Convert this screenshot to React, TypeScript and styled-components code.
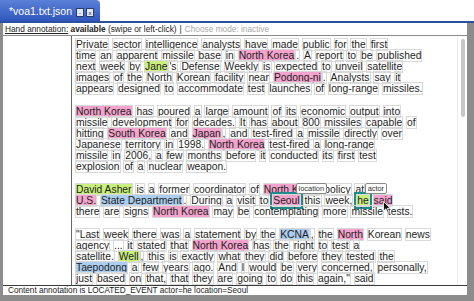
import React from 'react';
import styled, { createGlobalStyle } from 'styled-components';

const GlobalStyle = createGlobalStyle`
  html, body {
    margin: 0;
    padding: 0;
    background: #ffffff;
    font-family: "Liberation Sans", Arial, sans-serif;
  }
`;

const Frame = styled.div`
  width: 474px;
  height: 301px;
  display: flex;
  flex-direction: column;
  overflow: hidden;
`;

const TabBar = styled.div`
  height: 21px;
  display: flex;
  align-items: flex-end;
  background: #ffffff;
  border-bottom: 2px solid #2c4f9f;
`;

const Tab = styled.div`
  width: 100px;
  height: 21px;
  box-sizing: border-box;
  display: flex;
  align-items: center;
  padding-left: 9px;
  gap: 4px;
  background: linear-gradient(#5b80d8, #3157bd);
  border-top-right-radius: 4px;
  color: #ffffff;
  font-size: 10.5px;
`;

const TabButtons = styled.div`
  display: flex;
  gap: 2px;
  margin-top: 4px;
`;

const TabButton = styled.span`
  width: 6px;
  height: 7px;
  display: flex;
  align-items: center;
  justify-content: center;
  background: #dfe6f6;
  border: 1px solid #2b3d70;
  color: #1b2a55;
  font-size: 6px;
  line-height: 6px;
`;

const Body = styled.div`
  flex: 1;
  display: flex;
  padding: 0 7px 6px 3px;
  background: #8c8c8c;
  min-height: 0;
`;

const Panel = styled.div`
  flex: 1;
  display: flex;
  flex-direction: column;
  background: #ffffff;
  min-width: 0;
`;

const Header = styled.div`
  height: 12px;
  display: flex;
  align-items: center;
  gap: 3px;
  padding-left: 2px;
  border-bottom: 1px solid #8a8a8a;
  font-size: 8.3px;
  color: #222;
  white-space: nowrap;
`;

const Underlined = styled.span`
  text-decoration: underline;
`;

const Faded = styled.span`
  color: #a8a8a8;
`;

const Main = styled.div`
  flex: 1;
  display: flex;
  min-height: 0;
`;

const Gutter = styled.div`
  width: 68px;
  border-right: 1px solid #666;
`;

const TextArea = styled.div`
  position: relative;
  flex: 1;
  padding: 3px 0 0 3px;
  overflow: hidden;
  font-size: 10.3px;
  line-height: 11px;
  color: #1e1e1e;
`;

const Para = styled.div`
  & + & {
    margin-top: 12px;
  }
`;

const Line = styled.div`
  white-space: nowrap;
  height: 11px;
`;

const bg: Record<string, string> = {
  p: '#f4a3cc',
  g: '#c9ef7c',
  b: '#abcdf0',
};

const Word = styled.span<{ $kind?: string; $selected?: boolean }>`
  position: relative;
  border: 1px solid #d9d9d9;
  background: ${p => (p.$kind ? bg[p.$kind] : 'transparent')};
  outline: ${p => (p.$selected ? '2px solid #1f8b8b' : 'none')};
`;

const Label = styled.span`
  position: absolute;
  left: calc(100% - 4px);
  bottom: calc(100% + 1px);
  z-index: 2;
  background: #ffffff;
  border: 1px solid #8a8a8a;
  border-radius: 2px;
  padding: 0 2px;
  font-size: 7.4px;
  line-height: 9px;
  color: #333;
`;

const Cursor = styled.svg`
  position: absolute;
  left: 311px;
  top: 165px;
  z-index: 3;
`;

const Scroll = styled.div`
  width: 10px;
  border-left: 1px solid #ececec;
  padding: 3px 2px 0 3px;
  box-sizing: border-box;
`;

const Thumb = styled.div`
  height: 78px;
  border-radius: 3px;
  background: #c6c6c6;
`;

const Status = styled.div`
  height: 9px;
  display: flex;
  align-items: center;
  padding-left: 5px;
  border-top: 1px solid #3a3a3a;
  font-size: 8.2px;
  color: #222;
  white-space: nowrap;
`;

const paragraphs: string[][] = [
  [
    'Private sector intelligence analysts have made public for the first',
    'time an apparent missile base in [p|North Korea]. A report to be published',
    "next week by [g|Jane]'s Defense Weekly is expected to unveil satellite",
    'images of the North Korean facility near [p|Podong-ni]. Analysts say it',
    'appears designed to accommodate test launches of long-range missiles.',
  ],
  [
    '[p|North Korea] has poured a large amount of its economic output into',
    'missile development for decades. It has about 800 missiles capable of',
    'hitting [p|South Korea] and [p|Japan], and test-fired a missile directly over',
    'Japanese territory in 1998. [p|North Korea] test-fired a long-range',
    'missile in 2006, a few months before it conducted its first test',
    'explosion of a nuclear weapon.',
  ],
  [
    '[g|David Asher] is a former coordinator of [p|North Korea] policy at the',
    '[p|U.S.] [b|State Department]. During a visit to [p|Seoul|location] this week, [g|he|actor] [p|said]',
    'there are signs [p|North Korea] may be contemplating more missile tests.',
  ],
  [
    '"Last week there was a statement by the [b|KCNA], the [p|North] Korean news',
    'agency ... it stated that [p|North Korea] has the right to test a',
    'satellite. [g|Well], this is exactly what they did before they tested the',
    '[b|Taepodong] a few years ago. And I would be very concerned, personally,',
    'just based on that, that they are going to do this again," said',
  ],
];

interface Token {
  text: string;
  space: boolean;
  kind?: string;
  label?: string;
}

const tokenize = (line: string): Token[] => {
  const tokens: Token[] = [];
  let space = false;
  line.split(/(\[[^\]]+\])/).forEach(part => {
    if (!part) return;
    if (part.startsWith('[')) {
      const [kind, text, label] = part.slice(1, -1).split('|');
      tokens.push({ text, kind, label, space });
      space = false;
      return;
    }
    part.split(' ').forEach((w, i) => {
      if (i > 0) space = true;
      if (w) {
        tokens.push({ text: w, space });
        space = false;
      }
    });
  });
  return tokens;
};

const App = () => {
  return (
    <Frame>
      <GlobalStyle />
      <TabBar>
        <Tab>
          *voa1.txt.json
          <TabButtons>
            <TabButton>-</TabButton>
            <TabButton>x</TabButton>
          </TabButtons>
        </Tab>
      </TabBar>
      <Body>
        <Panel>
          <Header>
            <span>
              <Underlined>Hand annotation:</Underlined> <b>available</b> (swipe or left-click)
            </span>
            <span>|</span>
            <Faded>Choose mode: inactive</Faded>
          </Header>
          <Main>
            <Gutter />
            <TextArea>
              {paragraphs.map((lines, pi) => (
                <Para key={pi}>
                  {lines.map((line, li) => (
                    <Line key={li}>
                      {tokenize(line).map((t, ti) => (
                        <React.Fragment key={ti}>
                          {t.space ? ' ' : null}
                          <Word $kind={t.kind} $selected={!!t.label}>
                            {t.text}
                            {t.label && <Label>{t.label}</Label>}
                          </Word>
                        </React.Fragment>
                      ))}
                    </Line>
                  ))}
                </Para>
              ))}
              <Cursor width="8" height="12" viewBox="0 0 8 12">
                <path d="M0.5 0.5 L0.5 10 L2.8 7.8 L4.4 11.3 L5.8 10.7 L4.3 7.3 L7.3 7.3 Z" fill="#111" stroke="#fff" strokeWidth="0.8" />
              </Cursor>
            </TextArea>
            <Scroll>
              <Thumb />
            </Scroll>
          </Main>
          <Status>Content annotation is LOCATED_EVENT actor=he location=Seoul</Status>
        </Panel>
      </Body>
    </Frame>
  );
};

export default App;
